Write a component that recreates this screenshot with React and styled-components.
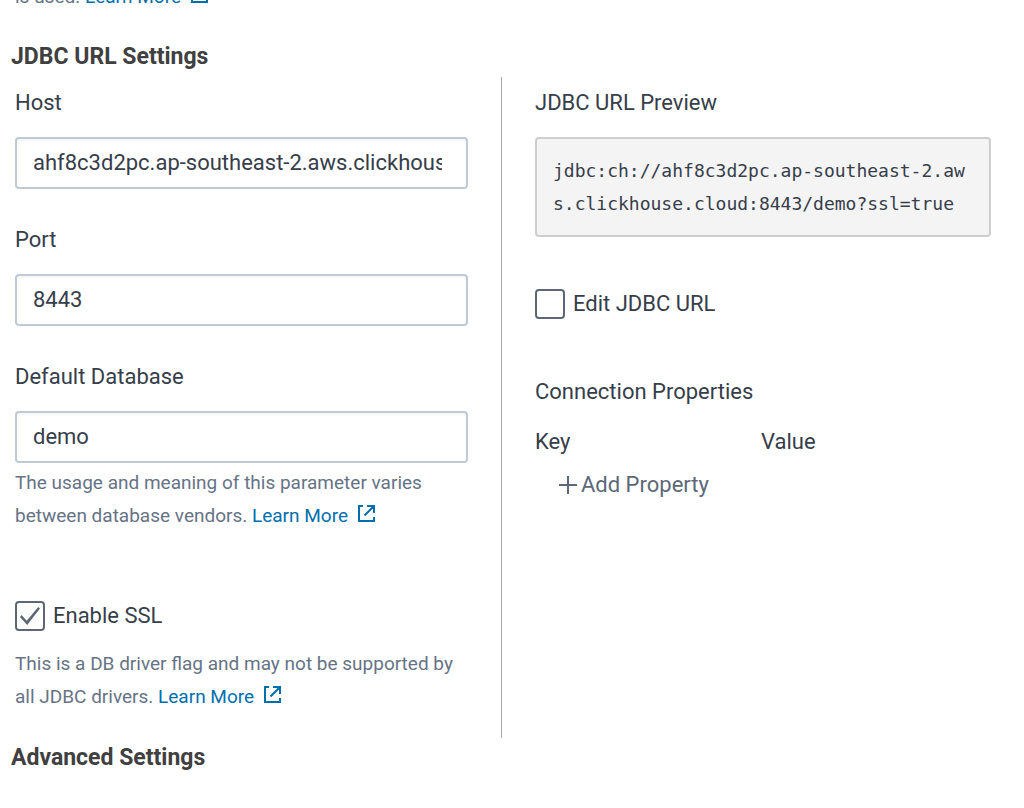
import React, { useState } from 'react'
import styled, { createGlobalStyle, ThemeProvider } from 'styled-components'

const theme = {
  colors: {
    text: '#363e4a',
    heading: '#404040',
    helper: '#667386',
    link: '#006fae',
    border: '#bfcad6',
    control: '#5c6776',
    divider: '#a8a8a8',
    codeBg: '#f4f4f4',
    codeBorder: '#cecece',
  },
  fonts: {
    body: 'Roboto, "Liberation Sans", sans-serif',
    code: '"DejaVu Sans Mono", "Liberation Mono", monospace',
  },
}

const ExternalLinkIcon = () => (
  <LinkIcon viewBox="0 0 17 17" aria-hidden="true">
    <path d="M5 1H1v15h15v-4" />
    <path d="M9 1h7v7M15.5 1.5l-9 9" />
  </LinkIcon>
)

const LearnMore = () => (
  <Link href="#learn-more">
    Learn More
    <ExternalLinkIcon />
  </Link>
)

const TextField = ({ id, label, value, onChange, children }) => (
  <Field>
    <Label htmlFor={id}>{label}</Label>
    <Input id={id} type="text" value={value} onChange={(e) => onChange(e.target.value)} />
    {children}
  </Field>
)

const App = () => {
  const [host, setHost] = useState('ahf8c3d2pc.ap-southeast-2.aws.clickhouse.cloud')
  const [port, setPort] = useState('8443')
  const [database, setDatabase] = useState('demo')
  const [ssl, setSsl] = useState(true)
  const [editUrl, setEditUrl] = useState(false)

  const url = `jdbc:ch://${host}:${port}/${database}${ssl ? '?ssl=true' : ''}`

  return (
    <ThemeProvider theme={theme}>
      <GlobalStyle />
      <Page>
        <Scrolled>
          <Intro>
            is used. <LearnMore />
          </Intro>

          <Heading>JDBC URL Settings</Heading>
          <Columns>
            <Settings>
              <TextField id="host" label="Host" value={host} onChange={setHost} />
              <TextField id="port" label="Port" value={port} onChange={setPort} />
              <TextField id="database" label="Default Database" value={database} onChange={setDatabase}>
                <Helper>
                  The usage and meaning of this parameter varies between database vendors. <LearnMore />
                </Helper>
              </TextField>
              <SslOption>
                <CheckLabel>
                  <Checkbox type="checkbox" checked={ssl} onChange={() => setSsl(!ssl)} />
                  Enable SSL
                </CheckLabel>
                <Helper>
                  This is a DB driver flag and may not be supported by all JDBC drivers. <LearnMore />
                </Helper>
              </SslOption>
            </Settings>

            <Preview>
              <Title>JDBC URL Preview</Title>
              <Code>{url}</Code>
              <CheckLabel>
                <Checkbox type="checkbox" checked={editUrl} onChange={() => setEditUrl(!editUrl)} />
                Edit JDBC URL
              </CheckLabel>
              <Properties>
                <Title>Connection Properties</Title>
                <PropertyTable>
                  <thead>
                    <tr>
                      <th scope="col">Key</th>
                      <th scope="col">Value</th>
                    </tr>
                  </thead>
                </PropertyTable>
                <AddButton type="button">
                  <svg viewBox="0 0 18 18" aria-hidden="true">
                    <path d="M9 0v18M0 9h18" />
                  </svg>
                  Add Property
                </AddButton>
              </Properties>
            </Preview>
          </Columns>

          <Heading>Advanced Settings</Heading>
        </Scrolled>
      </Page>
    </ThemeProvider>
  )
}

const GlobalStyle = createGlobalStyle`
  * {
    box-sizing: border-box;
    margin: 0;
    padding: 0;
  }

  body {
    background-color: #fff;
    color: ${({ theme }) => theme.colors.text};
    font-family: ${({ theme }) => theme.fonts.body};
    font-size: 22px;
    line-height: 32px;
  }
`;

const Page = styled.main`
  overflow: hidden;
  padding: 0 33px 24px 11px;
`;

/* the panel is scrolled, so its first line is cut by the top edge */
const Scrolled = styled.div`
  margin-top: -20px;
`;

const Helper = styled.p`
  color: ${({ theme }) => theme.colors.helper};
  font-size: 19px;
  line-height: 33px;
`;

const Intro = styled(Helper)`
  margin-bottom: 28px;
  padding-left: 4px;
`;

const Link = styled.a`
  color: ${({ theme }) => theme.colors.link};
  text-decoration: none;
  white-space: nowrap;
`;

const LinkIcon = styled.svg`
  width: 17px;
  height: 17px;
  margin-left: 10px;
  fill: none;
  stroke: currentColor;
  stroke-width: 2;
`;

const Heading = styled.h2`
  color: ${({ theme }) => theme.colors.heading};
  font-size: 23px;
  font-weight: 700;
`;

const Columns = styled.div`
  display: grid;
  grid-template-columns: 1fr 1fr;
  margin: 4px 0;
`;

const Settings = styled.section`
  min-width: 0;
  padding: 10px 33px 25px 4px;
`;

const Preview = styled.section`
  min-width: 0;
  padding: 10px 0 25px 33px;
  border-left: 1px solid ${({ theme }) => theme.colors.divider};
`;

const Field = styled.div`
  & + & {
    margin-top: 35px;
  }

  p {
    margin-top: 3px;
  }
`;

const Label = styled.label`
  display: block;
  margin-bottom: 18px;
`;

const Title = styled.h3`
  margin-bottom: 18px;
  font-size: 22px;
  font-weight: 400;
`;

const Input = styled.input`
  display: block;
  width: 100%;
  height: 52px;
  padding: 0 24px 2px 16px;
  border: 2px solid ${({ theme }) => theme.colors.border};
  border-radius: 4px;
  box-shadow: inset 0 2px 2px rgba(0, 0, 0, 0.04);
  color: inherit;
  font: inherit;
  outline: none;
`;

const CheckLabel = styled.label`
  display: flex;
  align-items: center;
  gap: 8px;
`;

const Checkbox = styled.input`
  appearance: none;
  display: grid;
  place-items: center;
  width: 30px;
  height: 30px;
  border: 2px solid ${({ theme }) => theme.colors.control};
  border-radius: 4px;

  &:checked::before {
    content: '';
    width: 20px;
    height: 18px;
    background-color: ${({ theme }) => theme.colors.control};
    clip-path: polygon(0 56%, 8% 45%, 34% 76%, 91% 0, 100% 9%, 36% 100%);
  }
`;

const SslOption = styled.div`
  margin-top: 68px;

  p {
    margin-top: 15px;
  }
`;

const Code = styled.pre`
  margin-bottom: 51px;
  padding: 15px 16px;
  border: 2px solid ${({ theme }) => theme.colors.codeBorder};
  border-radius: 4px;
  background-color: ${({ theme }) => theme.colors.codeBg};
  font-family: ${({ theme }) => theme.fonts.code};
  font-size: 18px;
  line-height: 33px;
  white-space: pre-wrap;
  word-break: break-all;
`;

const Properties = styled.div`
  margin-top: 56px;
  padding-right: 4px;
`;

const PropertyTable = styled.table`
  width: 100%;
  border-collapse: collapse;
  table-layout: fixed;

  th {
    font-weight: 400;
    text-align: left;
  }
`;

const AddButton = styled.button`
  display: flex;
  align-items: center;
  gap: 4px;
  margin: 11px 0 0 24px;
  border: none;
  background: none;
  color: #5c6878;
  font: inherit;
  cursor: pointer;

  svg {
    width: 18px;
    height: 18px;
    fill: none;
    stroke: currentColor;
    stroke-width: 2;
  }
`;

export default App
